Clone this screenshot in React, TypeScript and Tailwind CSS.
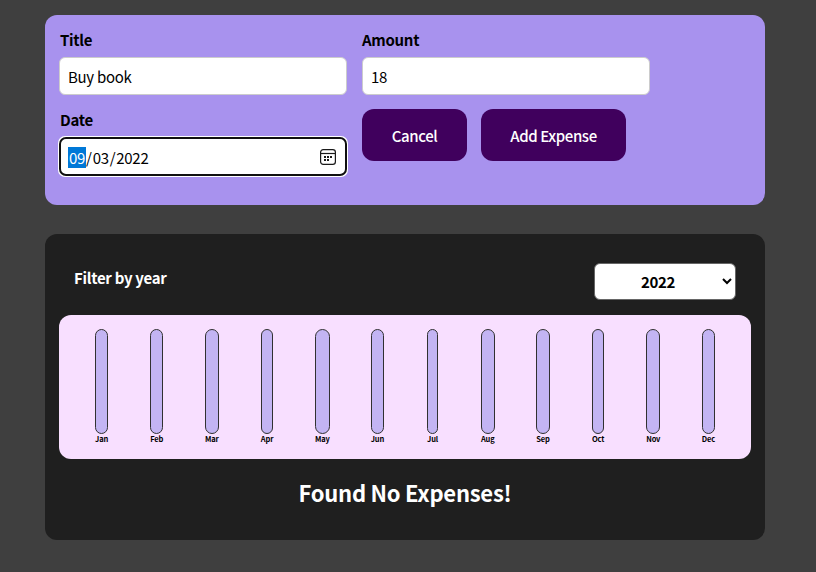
import React from "react";

const months: string[] = ["Jan", "Feb", "Mar", "Apr", "May", "Jun", "Jul", "Aug", "Sep", "Oct", "Nov", "Dec"];
const labelClass = "block h-[26px] text-[15px] tracking-[-0.3px] leading-[26px] font-bold text-black";
const inputClass = "block w-[288px] px-2 rounded-md border border-[#cccccc] bg-white text-[15px] tracking-[-0.3px] text-black";
const buttonClass = "h-[52px] pt-[2px] rounded-xl bg-[#40005d] text-white text-[15px] tracking-[-0.4px] font-medium";

function CalendarIcon() {
  return (
    <svg width="16" height="16" viewBox="0 0 16 16" fill="none" className="absolute left-[261px] top-[12px] pointer-events-none">
      <rect x="0.6" y="0.6" width="14.8" height="14.8" rx="2.6" stroke="#1a1a1a" strokeWidth="1.2" />
      <path d="M1 4.5H15" stroke="#1a1a1a" strokeWidth="1.2" />
      <rect x="4" y="7" width="2" height="2" fill="#1a1a1a" />
      <rect x="7" y="7" width="2" height="2" fill="#1a1a1a" />
      <rect x="10" y="7" width="2" height="2" fill="#1a1a1a" />
      <rect x="4" y="10" width="2" height="2" fill="#1a1a1a" />
      <rect x="7" y="10" width="2" height="2" fill="#1a1a1a" />
    </svg>
  );
}

export default function App() {
  return (
    <div className="min-h-screen bg-[#3f3f3f] pt-[15px] pl-[45px] font-['Noto_Sans_CJK_JP','Noto_Sans',sans-serif]">
      <div className="w-[720px] flex flex-col gap-[29px]">
        <form className="h-[190px] rounded-xl bg-[#a892ee] pl-[14px] pt-[12px] flex gap-[15px]">
          <div className="w-[288px] flex flex-col">
            <div>
              <label className={labelClass + " pl-px"}>Title</label>
              <input type="text" defaultValue="Buy book" className={inputClass + " h-[38px] mt-[4px]"} />
            </div>
            <div className="mt-[12px]">
              <label className={labelClass + " pl-px"}>Date</label>
              <div className="relative mt-[4px]">
                <input
                  type="date"
                  autoFocus
                  defaultValue="2022-09-03"
                  className={inputClass + " h-[39px] pt-[3px] focus:[&::-webkit-datetime-edit-month-field]:!bg-[#0078d7] focus:[&::-webkit-datetime-edit-month-field]:!text-white [&::-webkit-calendar-picker-indicator]:opacity-0"}
                />
                <CalendarIcon />
              </div>
            </div>
          </div>
          <div className="w-[288px] flex flex-col">
            <div>
              <label className={labelClass}>Amount</label>
              <input type="number" defaultValue="18" className={inputClass + " h-[38px] mt-[4px]"} />
            </div>
            <div className="mt-[14px] flex gap-[14px]">
              <button type="button" className={buttonClass + " w-[105px]"}>Cancel</button>
              <button type="button" className={buttonClass + " w-[145px]"}>Add Expense</button>
            </div>
          </div>
        </form>
        <section className="h-[306px] rounded-xl bg-[#1f1f1f] px-[14px] pt-[29px]">
          <div className="flex items-center justify-between px-[15px]">
            <span className="mb-[6px] text-white font-bold text-[15px] tracking-[-0.3px]">Filter by year</span>
            <select defaultValue="2022" className="w-[142px] h-[37px] pr-[2px] rounded-md bg-white text-black font-bold text-[15px] tracking-[-0.3px] text-center border border-[#666666]">
              <option>2022</option>
              <option>2021</option>
              <option>2020</option>
              <option>2019</option>
            </select>
          </div>
          <div className="mt-[15px] h-[144px] rounded-xl bg-[#f8dfff] py-[14px] px-[15px] grid grid-cols-12">
            {months.map((m) => (
              <div key={m} className="flex justify-center">
                <div className="h-[116px] flex flex-col items-stretch">
                  <div className="h-[105px] rounded-xl border border-[#313131] bg-[#c3b4f3]" />
                  <div className="text-[7.5px] tracking-[-0.15px] leading-[10px] font-bold text-center text-black">{m}</div>
                </div>
              </div>
            ))}
          </div>
          <h2 className="mt-[16px] text-center text-white font-bold text-[22px] tracking-[-0.25px] leading-[34px]">Found No Expenses!</h2>
        </section>
      </div>
    </div>
  );
}
